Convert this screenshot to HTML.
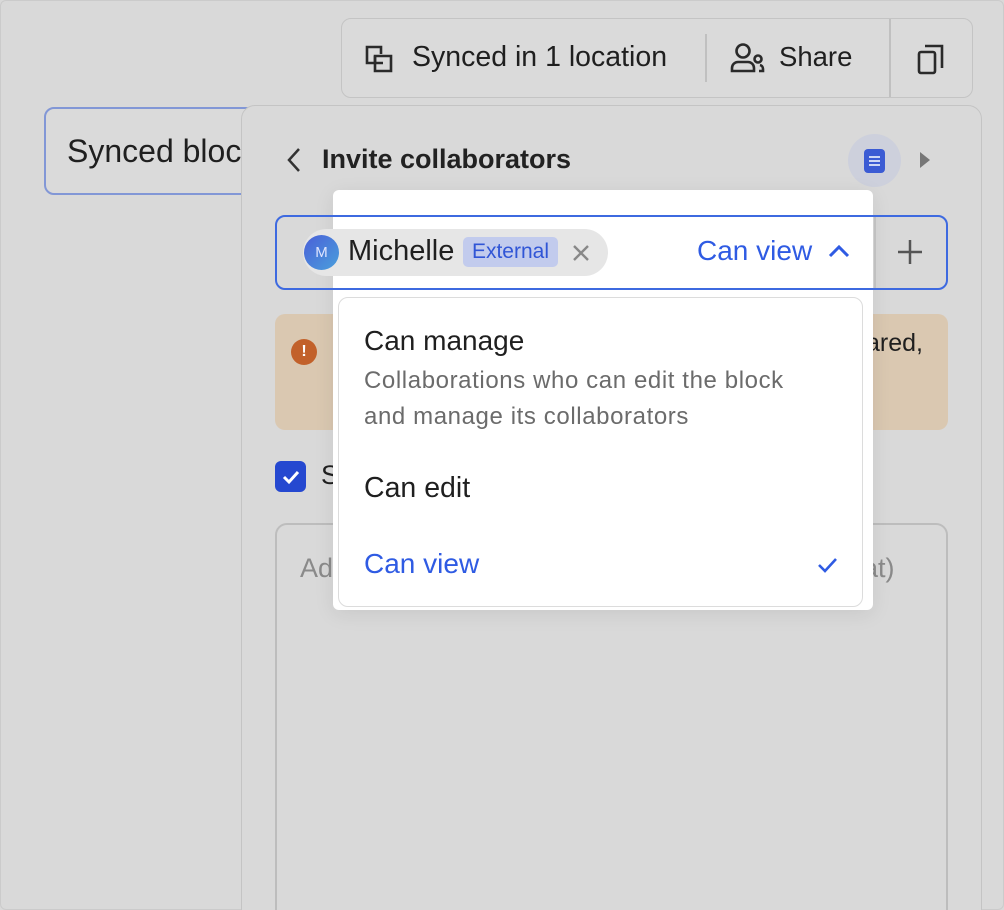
<!DOCTYPE html>
<html><head><meta charset="utf-8"><style>
*{box-sizing:border-box;margin:0;padding:0}
html{width:1004px;height:910px;overflow:hidden}
body{width:1004px;height:910px;overflow:hidden;background:#d9d9d9;font-family:"Liberation Sans",sans-serif;position:relative;color:#1f1f1f}
.abs{position:absolute}
.frame{left:0;top:0;width:1004px;height:910px;border:1px solid #cbcbcb;border-radius:6px}
.toolbar{left:341px;top:18px;width:632px;height:80px;border:1.5px solid #c4c4c4;border-radius:10px;background:#dadada}
.t{font-size:28.5px;white-space:nowrap}
.synced{left:44px;top:107px;width:230px;height:88px;border:2px solid #8297d6;border-radius:10px;background:#dadada}
.panel{left:241px;top:105px;width:741px;height:830px;border:1.5px solid #c4c4c4;border-radius:14px;background:#d9d9d9}
.white{left:333px;top:190px;width:540px;height:420px;background:#fff;border-radius:6px;box-shadow:0 4px 20px rgba(0,0,0,.08)}
.input{left:275px;top:215px;width:673px;height:75px;border:2px solid #3e6ae0;border-radius:10px}
.card{left:338px;top:297px;width:525px;height:310px;border:1.5px solid #dcdcdc;border-radius:10px;background:#fff}
</style></head><body>
<div class="abs frame"></div>
<div class="abs toolbar"></div>
<div class="abs" style="left:705px;top:34px;width:1.5px;height:48px;background:#c0c0c0"></div>
<div class="abs" style="left:889px;top:19px;width:1.5px;height:78px;background:#c0c0c0"></div>
<svg class="abs" style="left:363px;top:43px" width="34" height="32" viewBox="0 0 34 32" fill="none" stroke="#2a2a2a" stroke-width="2.6"><path d="M12 20H4V4h14v7"/><path d="M12 13h16v15H12z" /><path d="M12 13v7h8"/></svg>
<div class="abs t" style="left:412px;top:41px">Synced in 1 location</div>
<svg class="abs" style="left:730px;top:42px" width="36" height="32" viewBox="0 0 36 32" fill="none" stroke="#2a2a2a" stroke-width="2.6"><circle cx="13" cy="9" r="6.5"/><path d="M2 29v-3a6 6 0 0 1 6-6h10a6 6 0 0 1 6 6v3z"/><circle cx="28" cy="17" r="3.5"/><path d="M29 29h4v-2a4 4 0 0 0-3-4"/></svg>
<div class="abs t" style="left:779px;top:41px;font-size:27.5px">Share</div>
<svg class="abs" style="left:916px;top:42px" width="30" height="34" viewBox="0 0 30 34" fill="none" stroke="#2a2a2a" stroke-width="2.6"><rect x="3" y="10" width="16" height="21" rx="2"/><path d="M9 4h17v22"/></svg>

<div class="abs synced"></div>
<div class="abs" style="left:67px;top:133px;font-size:32px;white-space:nowrap">Synced bloc</div>

<div class="abs panel"></div>
<svg class="abs" style="left:284px;top:146px" width="20" height="30" viewBox="0 0 20 30" fill="none" stroke="#333" stroke-width="2.5"><path d="M15 3L5 14l10 11"/></svg>
<div class="abs" style="left:322px;top:144px;font-size:27px;font-weight:bold;color:#222;white-space:nowrap">Invite collaborators</div>
<div class="abs" style="left:848px;top:134px;width:53px;height:53px;border-radius:50%;background:#cdd0dc"></div>
<div class="abs" style="left:864px;top:149px;width:21px;height:24px;border-radius:4px;background:#3b5bd4"></div>
<div class="abs" style="left:869px;top:156px;width:11px;height:2px;background:#cdd6f5;box-shadow:0 4px 0 #cdd6f5,0 8px 0 #cdd6f5"></div>
<svg class="abs" style="left:918px;top:150px" width="14" height="20"><path d="M2 2l10 8-10 8z" fill="#777"/></svg>

<div class="abs" style="left:275px;top:314px;width:673px;height:116px;background:#dac8b1;border-radius:10px"></div>
<div class="abs" style="left:291px;top:339px;width:26px;height:26px;border-radius:50%;background:#c2612a;color:#fff;font-size:16px;font-weight:bold;text-align:center;line-height:26px">!</div>
<div class="abs t" style="left:866px;top:329px;font-size:25px">ared,</div>
<div class="abs" style="left:275px;top:461px;width:31px;height:31px;border-radius:6px;background:#2548d0"></div>
<svg class="abs" style="left:281px;top:467px" width="20" height="20" fill="none" stroke="#fff" stroke-width="3"><path d="M3 10l5 5 9-10"/></svg>
<div class="abs t" style="left:321px;top:460px;font-size:27px">S</div>
<div class="abs" style="left:275px;top:523px;width:673px;height:420px;border:2px solid #bdbdbd;border-radius:12px"></div>
<div class="abs t" style="left:300px;top:553px;font-size:27px;color:#8a8a8a">Ad</div>
<div class="abs t" style="left:863px;top:553px;font-size:27px;color:#8a8a8a">at)</div>

<div class="abs white"></div>
<div class="abs input"></div>
<div class="abs" style="left:874px;top:217px;width:1.5px;height:71px;background:#c0c0c0"></div>
<svg class="abs" style="left:896px;top:238px" width="28" height="28" stroke="#555" stroke-width="2.5"><path d="M14 2v24M2 14h24"/></svg>
<div class="abs" style="left:303px;top:229px;width:305px;height:47px;border-radius:24px;background:#e6e6e6"></div>
<div class="abs" style="left:304px;top:235px;width:35px;height:35px;border-radius:50%;background:linear-gradient(135deg,#4a5fd8,#4aa0dc);color:#dfe6ff;font-size:15px;text-align:center;line-height:35px">M</div>
<div class="abs t" style="left:348px;top:235px;font-size:29px">Michelle</div>
<div class="abs" style="left:463px;top:237px;width:95px;height:30px;border-radius:5px;background:#c2cbed;color:#3055d6;font-size:21px;text-align:center;line-height:30px">External</div>
<svg class="abs" style="left:571px;top:243px" width="20" height="20" stroke="#888" stroke-width="2.4"><path d="M3 3l14 14M17 3L3 17"/></svg>
<div class="abs t" style="left:697px;top:235px;color:#2f5be3;font-size:28px">Can view</div>
<svg class="abs" style="left:827px;top:243px" width="24" height="16" fill="none" stroke="#2f5be3" stroke-width="3"><path d="M3 13l9-9 9 9"/></svg>

<div class="abs card"></div>
<div class="abs" style="left:364px;top:325px;font-size:28px;color:#1f1f1f;white-space:nowrap">Can manage</div>
<div class="abs" style="left:364px;top:363px;font-size:24px;letter-spacing:0.6px;color:#6b6b6b;line-height:36px;white-space:nowrap">Collaborations who can edit the block<br>and manage its collaborators</div>
<div class="abs" style="left:364px;top:472px;font-size:28.5px;white-space:nowrap">Can edit</div>
<div class="abs" style="left:364px;top:548px;font-size:28px;color:#2f5be3;white-space:nowrap">Can view</div>
<svg class="abs" style="left:817px;top:556px" width="22" height="18" fill="none" stroke="#2f5be3" stroke-width="2.6"><path d="M2 9l6 6L19 3"/></svg>
</body></html>
